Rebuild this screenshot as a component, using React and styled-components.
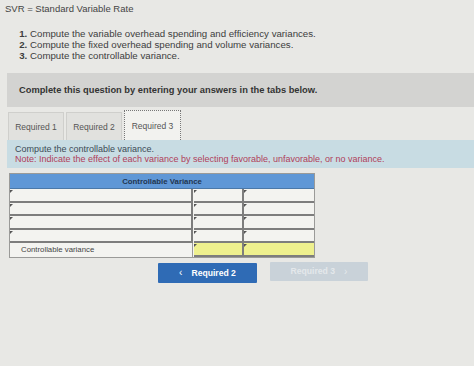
import React from "react";
import styled, { createGlobalStyle } from "styled-components";

const GlobalStyle = createGlobalStyle`
  html, body {
    margin: 0;
    padding: 0;
    background: #e8e8e5;
  }
  body {
    font-family: "Liberation Sans", Arial, sans-serif;
    color: #3a3a3a;
  }
`;

const Page = styled.div`
  width: 474px;
  height: 366px;
  overflow: hidden;
  background: #e8e8e5;
  padding-top: 3px;
  box-sizing: border-box;
`;

const Legend = styled.div`
  margin-left: 5px;
  font-size: 9.5px;
  line-height: 12px;
  color: #444;
`;

const Steps = styled.ol`
  margin: 13px 0 0 0;
  padding-left: 30px;
  font-size: 9.7px;
  line-height: 11px;
  color: #3d3d3d;

  li::marker {
    font-weight: bold;
  }
`;

const Banner = styled.div`
  margin: 12px 0 0 7px;
  height: 34px;
  background: #d3d3d1;
  display: flex;
  align-items: center;
  padding-left: 12px;
  font-size: 9.3px;
  font-weight: bold;
  color: #333;
`;

const TabRow = styled.div`
  display: flex;
  gap: 2px;
  margin: 3px 0 0 8px;
  height: 30px;
  align-items: flex-end;
`;

const Tab = styled.div`
  width: ${(p) => (p.$active ? "57px" : "56px")};
  height: ${(p) => (p.$active ? "30px" : "28px")};
  box-sizing: border-box;
  display: flex;
  align-items: center;
  justify-content: center;
  font-size: 8.5px;
  color: #555;
  background: ${(p) => (p.$active ? "#f2f2ef" : "#e1e1de")};
  border: ${(p) => (p.$active ? "1px dotted #777" : "1px solid #cfcfcc")};
  border-bottom: none;
`;

const Info = styled.div`
  margin-left: 7px;
  height: 28px;
  background: #c8dce3;
  padding: 5px 0 0 8px;
  box-sizing: border-box;
  font-size: 9px;
  line-height: 9.5px;
  color: #3c4a55;
`;

const Note = styled.div`
  color: #b0405a;
`;

const Grid = styled.div`
  margin: 5px 0 0 9px;
  width: 304px;
  display: grid;
  grid-template-columns: 183px 51px 70px;
  border: 1px solid #9a9a98;
  background: #f3f3f0;
`;

const Header = styled.div`
  grid-column: 1 / -1;
  height: 14px;
  background: #5f97d6;
  display: flex;
  align-items: center;
  justify-content: center;
  font-size: 7.8px;
  font-weight: bold;
  color: #1f3550;
  border-bottom: 1px solid #4b78a8;
`;

const Cell = styled.div`
  position: relative;
  height: 11.5px;
  background: ${(p) => (p.$total ? "#eef08e" : "#f3f3f0")};
  border: 1px solid #7d7d7d;
  border-width: 0 ${(p) => (p.$edge ? "0" : "2px")} 2px 0;
  margin-left: ${(p) => (p.$shift ? "1px" : "0")};

  &::before {
    content: "";
    position: absolute;
    left: 0;
    top: 1px;
    border-left: 3px solid #555;
    border-bottom: 3px solid transparent;
  }
`;

const Label = styled.div`
  height: 13.5px;
  display: flex;
  align-items: center;
  padding-left: 11px;
  font-size: 7.8px;
  color: #444;
  border-right: 1px solid #9a9a98;
`;

const Nav = styled.div`
  display: flex;
  gap: 13px;
  margin: 5px 0 0 158px;
  align-items: flex-start;
`;

const NavButton = styled.div`
  width: ${(p) => (p.$disabled ? "98px" : "99px")};
  height: ${(p) => (p.$disabled ? "19px" : "20px")};
  margin-top: ${(p) => (p.$disabled ? "-1px" : "0")};
  display: flex;
  align-items: center;
  justify-content: center;
  gap: 9px;
  font-size: 8.6px;
  font-weight: bold;
  color: ${(p) => (p.$disabled ? "#e4e8eb" : "#fff")};
  background: ${(p) => (p.$disabled ? "#c9d2d9" : "#2f6bb5")};
  border-radius: 1px;
`;

const Chevron = styled.span`
  font-size: 10px;
  font-weight: normal;
`;

const rows = [0, 1, 2, 3];

export default function App() {
  return (
    <Page>
      <GlobalStyle />
      <Legend>SVR = Standard Variable Rate</Legend>
      <Steps>
        <li>Compute the variable overhead spending and efficiency variances.</li>
        <li>Compute the fixed overhead spending and volume variances.</li>
        <li>Compute the controllable variance.</li>
      </Steps>
      <Banner>Complete this question by entering your answers in the tabs below.</Banner>
      <TabRow>
        <Tab>Required 1</Tab>
        <Tab>Required 2</Tab>
        <Tab $active>Required 3</Tab>
      </TabRow>
      <Info>
        Compute the controllable variance.
        <Note>Note: Indicate the effect of each variance by selecting favorable, unfavorable, or no variance.</Note>
      </Info>
      <Grid>
        <Header>Controllable Variance</Header>
        {rows.map((r) => (
          <React.Fragment key={r}>
            <Cell />
            <Cell $shift />
            <Cell $edge />
          </React.Fragment>
        ))}
        <Label>Controllable variance</Label>
        <Cell $total $shift />
        <Cell $total $edge />
      </Grid>
      <Nav>
        <NavButton>
          <Chevron>&lsaquo;</Chevron>Required 2
        </NavButton>
        <NavButton $disabled>
          Required 3<Chevron>&rsaquo;</Chevron>
        </NavButton>
      </Nav>
    </Page>
  );
}
